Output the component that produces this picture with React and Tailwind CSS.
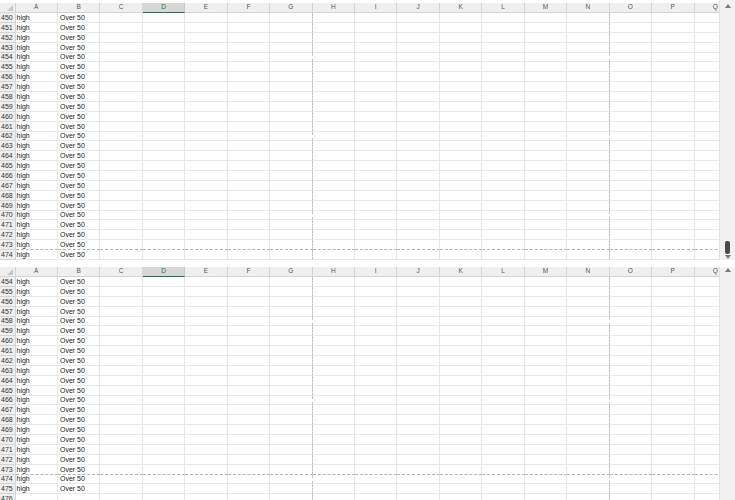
import React from "react";

const COLS = ["A","B","C","D","E","F","G","H","I","J","K","L","M","N","O","P","Q"];
const GRID = "grid grid-cols-[15.5px_repeat(17,42.45px)]";

function HeaderRow() {
  return (
    <div className={`${GRID} h-[10px] shrink-0`}>
      <div className="relative bg-[#efefef] border-r border-b border-[#d4d4d4]">
        <div className="absolute right-[2px] bottom-[1px] w-0 h-0 border-l-[6px] border-l-transparent border-b-[6px] border-b-[#c8c8c8]" />
      </div>
      {COLS.map((c) =>
        c === "D" ? (
          <div key={c} className="flex items-center justify-center bg-[#d6d6d6] border-r border-[#c8c8c8] border-b border-b-[#217346] text-[6.5px] leading-none text-[#217346]">
            {c}
          </div>
        ) : (
          <div key={c} className="flex items-center justify-center bg-[#efefef] border-r border-b border-[#d4d4d4] text-[6.5px] leading-none text-[#555]">
            {c}
          </div>
        )
      )}
    </div>
  );
}

function Row({ n, filled }) {
  const pageBreak = n === 473;
  return (
    <div className={`${GRID} h-[9.875px] shrink-0`}>
      <div className="flex items-center bg-[#efefef] border-r border-b border-[#d4d4d4] pl-[1px] text-[7px] leading-none text-[#333]">
        {n}
      </div>
      {COLS.map((c) => {
        const vDash = c === "G" || c === "N";
        const cls = [
          "flex items-center overflow-hidden whitespace-nowrap text-[7px] leading-none text-[#222] border-r border-b",
          vDash ? "border-r-[#c2c2c2] [border-right-style:dashed]" : "border-r-[#e6e6e6]",
          pageBreak ? "border-b-[#b4b4b4] [border-bottom-style:dashed]" : "border-b-[#e9e9e9]",
          c === "A" ? "pl-[1px]" : "pl-[2px]",
        ].join(" ");
        let txt = "";
        if (filled && c === "A") txt = "high";
        if (filled && c === "B") txt = "Over 50";
        return (
          <div key={c} className={cls}>
            {txt}
          </div>
        );
      })}
    </div>
  );
}

function Pane({ start, count, lastFilled, height, topPad, thumb }) {
  const rows = [];
  for (let i = 0; i < count; i++) rows.push(start + i);
  return (
    <div className="flex shrink-0 overflow-hidden bg-white" style={{ height }}>
      <div className={`flex-1 min-w-0 overflow-hidden flex flex-col ${topPad ? "pt-[3px]" : ""}`}>
        <HeaderRow />
        {rows.map((n) => (
          <Row key={n} n={n} filled={n <= lastFilled} />
        ))}
      </div>
      <div className={`w-[16px] shrink-0 bg-[#f1f1f1] border-l border-[#e2e2e2] flex flex-col items-center ${topPad ? "pt-[3px]" : ""}`}>
        <div className="mt-[1px] w-0 h-0 border-l-[3px] border-l-transparent border-r-[3px] border-r-transparent border-b-[4px] border-b-[#777]" />
        <div className="flex-1" />
        {thumb && (
          <>
            <div className="w-[5px] h-[13px] rounded-[2px] bg-[#4a4a4a] mb-[1px]" />
            <div className="mb-[1px] w-0 h-0 border-l-[3px] border-l-transparent border-r-[3px] border-r-transparent border-t-[4px] border-t-[#777]" />
          </>
        )}
      </div>
    </div>
  );
}

export default function App() {
  return (
    <div className="w-[735px] h-[500px] overflow-hidden bg-white flex flex-col font-['Liberation_Sans',Arial,sans-serif]">
      <Pane start={450} count={25} lastFilled={475} height={260} topPad thumb />
      <div className="h-[7px] shrink-0 bg-white" />
      <Pane start={454} count={23} lastFilled={475} height={233} />
    </div>
  );
}
